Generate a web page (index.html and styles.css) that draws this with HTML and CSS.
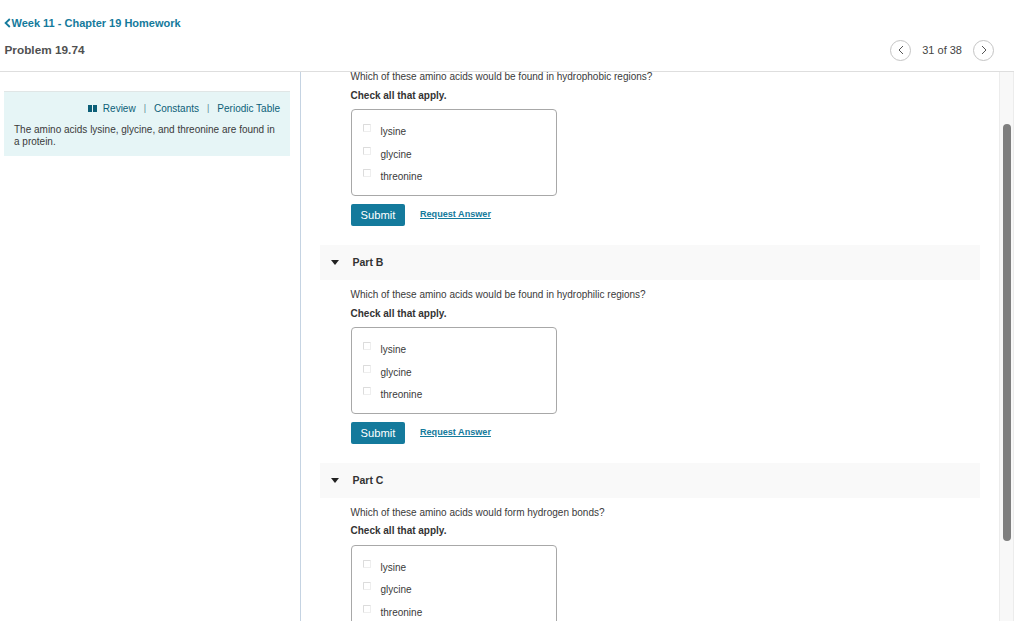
FILE: index.html
```html
<!DOCTYPE html>
<html lang="en">
<head>
<meta charset="utf-8">
<title>Problem 19.74</title>
<link rel="stylesheet" href="styles.css">
</head>
<body>
<div class="page">
  <header class="header">
    <a class="back" href="#"><svg class="back-icon" viewBox="0 0 7 10" width="7" height="10"><path d="M5.8 1 1.6 5l4.2 4" fill="none" stroke="#147a9c" stroke-width="1.8"/></svg>Week 11 - Chapter 19 Homework</a>
    <div class="title-row">
      <h1 class="title">Problem 19.74</h1>
      <nav class="pager">
        <span class="pager-btn"><svg viewBox="0 0 8 12" width="8" height="12"><path d="M6 2 2 6l4 4" fill="none" stroke="#555" stroke-width="1"/></svg></span>
        <span class="pager-text">31 of 38</span>
        <span class="pager-btn"><svg viewBox="0 0 8 12" width="8" height="12"><path d="M2 2l4 4-4 4" fill="none" stroke="#555" stroke-width="1"/></svg></span>
      </nav>
    </div>
  </header>
  <div class="body">
    <aside class="side">
      <div class="info">
        <div class="links">
          <svg class="book" viewBox="0 0 9 7" width="9" height="7"><path d="M0 0h4v7H0zM5 0h4v7H5z" fill="#0c5f78"/></svg>
          <a href="#">Review</a><span class="sep">|</span><a href="#">Constants</a><span class="sep">|</span><a href="#">Periodic Table</a>
        </div>
        <p class="info-text">The amino acids lysine, glycine, and threonine are found in a protein.</p>
      </div>
    </aside>
    <main class="content">
      <section class="part part-a">
        <p class="question">Which of these amino acids would be found in hydrophobic regions?</p>
        <p class="hint">Check all that apply.</p>
        <div class="options">
          <label class="option"><span class="box"></span><span class="label">lysine</span></label>
          <label class="option"><span class="box"></span><span class="label">glycine</span></label>
          <label class="option"><span class="box"></span><span class="label">threonine</span></label>
        </div>
        <div class="actions"><button class="submit">Submit</button><a class="request" href="#">Request Answer</a></div>
      </section>
      <section class="part">
        <div class="part-head"><span class="caret"></span><h2 class="part-title">Part B</h2></div>
        <p class="question">Which of these amino acids would be found in hydrophilic regions?</p>
        <p class="hint">Check all that apply.</p>
        <div class="options">
          <label class="option"><span class="box"></span><span class="label">lysine</span></label>
          <label class="option"><span class="box"></span><span class="label">glycine</span></label>
          <label class="option"><span class="box"></span><span class="label">threonine</span></label>
        </div>
        <div class="actions"><button class="submit">Submit</button><a class="request" href="#">Request Answer</a></div>
      </section>
      <section class="part">
        <div class="part-head"><span class="caret"></span><h2 class="part-title">Part C</h2></div>
        <p class="question">Which of these amino acids would form hydrogen bonds?</p>
        <p class="hint">Check all that apply.</p>
        <div class="options">
          <label class="option"><span class="box"></span><span class="label">lysine</span></label>
          <label class="option"><span class="box"></span><span class="label">glycine</span></label>
          <label class="option"><span class="box"></span><span class="label">threonine</span></label>
        </div>
      </section>
    </main>
    <div class="scrollbar"><div class="thumb"></div></div>
  </div>
</div>
</body>
</html>
```
FILE: styles.css
```css
* { box-sizing: border-box; }
html, body { margin: 0; height: 100%; overflow: hidden; background: #fff; }
body { font-family: "Liberation Sans", Arial, sans-serif; font-size: 10px; color: #333; }
a { text-decoration: none; }
p, h1, h2 { margin: 0; }

.page { width: 1014px; height: 621px; display: flex; flex-direction: column; }

.header { height: 72px; flex: none; border-bottom: 1px solid #dedede; padding: 15px 20px 0 4px; }
.back { display: flex; align-items: center; gap: 0.5px; height: 15px; color: #147a9c; font-size: 11px; font-weight: 700; }
.back-icon { flex: none; }
.title-row { display: flex; align-items: center; justify-content: space-between; margin-top: 7px; height: 26px; }
.title { margin-left: 0.5px; font-size: 11.8px; font-weight: 700; color: #505050; }
.pager { display: flex; align-items: center; gap: 11px; }
.pager-btn { width: 21px; height: 21px; border: 1px solid #c4c4c4; border-radius: 50%; display: flex; align-items: center; justify-content: center; }
.pager-text { font-size: 11px; color: #444; }

.body { flex: 1; min-height: 0; display: flex; }

.side { width: 301px; flex: none; border-right: 1px solid #c5d3e2; padding: 19px 10px 0 4px; }
.info { height: 65px; background: #e6f5f6; border-top: 1px solid #e0e6e6; padding: 9px 10px 0 10px; }
.links { display: flex; justify-content: flex-end; align-items: center; color: #0c5f78; height: 14px; }
.links a { color: #0c5f78; }
.book { margin-right: 6px; }
.sep { margin: 0 8px; color: #5f8c98; font-size: 9px; }
.info-text { margin-top: 9px; line-height: 12px; color: #3a3a3a; }

.content { flex: 1; min-width: 0; overflow: hidden; padding: 0 19px; }
.part { padding-bottom: 18.5px; }
.part-a { margin-top: -2px; padding-bottom: 19px; }
.part-head { height: 35px; background: #f9f9f9; display: flex; align-items: center; padding: 0 0 1px 11px; margin-bottom: 8px; }
.caret { width: 0; height: 0; border-left: 4px solid transparent; border-right: 4px solid transparent; border-top: 5px solid #222; margin: 1px 13.5px 0 0; }
.part-title { font-size: 10.5px; font-weight: 700; color: #333; }
.question { margin-left: 30.5px; line-height: 14px; color: #3a3a3a; }
.hint { margin: 4.5px 0 0 30.5px; line-height: 14px; font-weight: 700; color: #333; }
.options { margin: 6.5px 0 0 31px; width: 206px; height: 87px; border: 1px solid #a8a8a8; border-radius: 4px; padding: 15px 0 0 11px; display: flex; flex-direction: column; gap: 8.5px; }
.option { display: flex; height: 14px; gap: 9.5px; }
.box { width: 8px; height: 8px; margin-top: -1px; border: 1px solid; border-color: #dcdcdc #eeeeee #eeeeee #dcdcdc; border-radius: 1px; flex: none; }
.label { line-height: 14px; color: #3a3a3a; }
.actions { display: flex; align-items: center; gap: 15px; margin: 8px 0 0 31px; }
.submit { width: 54px; height: 22px; padding: 0; border: 0; border-radius: 2px; background: #147a9c; color: #fff; font: 11.2px "Liberation Sans", Arial, sans-serif; }
.request { font-size: 9.1px; font-weight: 700; color: #147a9c; text-decoration: underline; position: relative; top: -1px; }

.scrollbar { width: 15px; flex: none; background: #f8f8f8; border-left: 1px solid #ececec; border-right: 1px solid #ececec; padding: 52px 2px 0 3px; }
.thumb { height: 417px; background: #7f7f7f; border-radius: 5px; }
```
